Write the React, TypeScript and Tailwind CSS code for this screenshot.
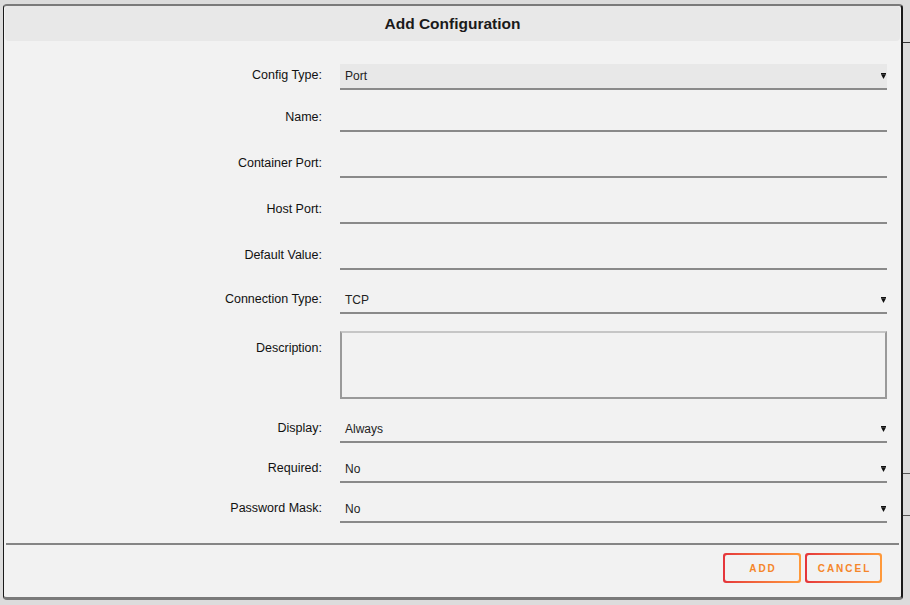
import React from "react";

type Field = {
  label: string;
  kind: "select" | "text" | "area";
  value?: string;
  filled?: boolean;
  mt: string;
};

const fields: Field[] = [
  { label: "Config Type:", kind: "select", value: "Port", filled: true, mt: "mt-[23px]" },
  { label: "Name:", kind: "text", mt: "mt-[16px]" },
  { label: "Container Port:", kind: "text", mt: "mt-[20px]" },
  { label: "Host Port:", kind: "text", mt: "mt-[20px]" },
  { label: "Default Value:", kind: "text", mt: "mt-[20px]" },
  { label: "Connection Type:", kind: "select", value: "TCP", mt: "mt-[18px]" },
  { label: "Description:", kind: "area", mt: "mt-[17px]" },
  { label: "Display:", kind: "select", value: "Always", mt: "mt-[18px]" },
  { label: "Required:", kind: "select", value: "No", mt: "mt-[14px]" },
  { label: "Password Mask:", kind: "select", value: "No", mt: "mt-[14px]" },
];

function Caret() {
  return (
    <svg width="5" height="6" viewBox="0 0 5 6" className="shrink-0">
      <rect x="0" y="0" width="5" height="1.2" fill="#111" />
      <polygon points="0,1.2 5,1.2 2.5,6" fill="#111" />
    </svg>
  );
}

function FormRow({ f }: { f: Field }) {
  if (f.kind === "area") {
    return (
      <div className={`flex ${f.mt}`}>
        <div className="w-[317px] shrink-0 pt-[8px] text-right text-[12.5px] text-[#111]">
          {f.label}
        </div>
        <div className="ml-[18px] h-[68px] w-[547px] border-2 border-[#9a9a9a] border-t-[#c6c6c6]" />
      </div>
    );
  }
  return (
    <div className={`flex items-center ${f.mt}`}>
      <div className="w-[317px] shrink-0 pb-[3px] text-right text-[12.5px] text-[#111]">
        {f.label}
      </div>
      <div
        className={`ml-[18px] flex h-[26px] w-[547px] items-center justify-between border-b-2 border-[#8a8a8a] pl-[5px] pr-[1px] text-[12px] text-[#222] ${
          f.filled ? "bg-[#e8e8e8]" : ""
        }`}
      >
        <span>{f.value ?? ""}</span>
        {f.kind === "select" && <Caret />}
      </div>
    </div>
  );
}

function OutlineButton({ label, w }: { label: string; w: string }) {
  return (
    <div className={`rounded-[3px] bg-gradient-to-r from-[#e5343b] to-[#ff9a3a] p-[2px] ${w}`}>
      <div className="flex h-[26px] items-center justify-center rounded-[2px] bg-[#f2f2f2] pl-[2px] text-[10px] font-bold tracking-[2px] text-[#f5862a]">
        {label}
      </div>
    </div>
  );
}

export default function App() {
  return (
    <div
      className="flex h-[605px] w-[910px] overflow-hidden bg-[#dcdcdc]"
      style={{ fontFamily: '"Liberation Sans", Arial, sans-serif' }}
    >
      <div className="ml-[3px] mt-[4px] flex h-[596px] w-[900px] shrink-0 flex-col rounded-[4px] border-l-[1.5px] border-r-2 border-t-2 border-b-[3px] border-l-[#1a1a1a] border-r-[#1a1a1a] border-t-[#7a7a7a] border-b-[#7a7a7a] bg-[#f2f2f2] px-[1px]">
        <div className="flex h-[35px] items-center justify-center rounded-[4px] bg-[#e8e8e8] pt-[1px] text-[15.5px] font-bold text-[#1a1a1a]">
          Add Configuration
        </div>

        <div className="flex flex-col">
          {fields.map((f) => (
            <FormRow key={f.label} f={f} />
          ))}
        </div>

        <div className="mx-[1px] mt-[20px] border-t-2 border-[#858585]" />

        <div className="mt-[8px] flex justify-end gap-[4px] pr-[18px]">
          <OutlineButton label="ADD" w="w-[78px]" />
          <OutlineButton label="CANCEL" w="w-[77px]" />
        </div>
      </div>

      <div className="flex w-[7px] flex-col">
        <div className="mt-[42px] h-[1px] bg-[#333]" />
        <div className="mt-[430px] h-[1px] bg-[#555]" />
        <div className="mt-[41px] h-[1px] bg-[#555]" />
      </div>
    </div>
  );
}
